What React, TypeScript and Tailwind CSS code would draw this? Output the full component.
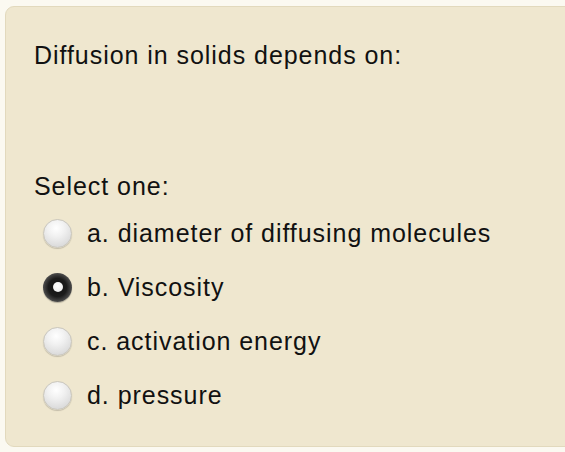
import React from "react";

const options = [
  { label: "a. diameter of diffusing molecules", checked: false },
  { label: "b. Viscosity", checked: true },
  { label: "c. activation energy", checked: false },
  { label: "d. pressure", checked: false },
];

function Radio({ checked }: { checked: boolean }) {
  if (checked) {
    return (
      <div className="flex h-[29px] w-[29px] shrink-0 items-center justify-center rounded-full bg-[radial-gradient(circle_at_50%_50%,#111_0%,#1c1c1c_45%,#555_75%,#9a9a9a_100%)] shadow-[0_1px_1px_rgba(0,0,0,0.25)]">
        <div className="h-[10px] w-[10px] rounded-full bg-[radial-gradient(circle_at_45%_40%,#ffffff_0%,#f2f2f2_60%,#cfcfcf_100%)]" />
      </div>
    );
  }
  return (
    <div className="h-[29px] w-[29px] shrink-0 rounded-full border border-[#c9c6bd] bg-[radial-gradient(circle_at_45%_30%,#ffffff_0%,#f1f1f1_35%,#dcdcdc_75%,#c8c8c8_100%)] shadow-[0_1px_1px_rgba(0,0,0,0.18)]" />
  );
}

export default function App() {
  return (
    <div className="min-h-[452px] w-[565px] overflow-hidden bg-[#fbf9f1] pl-[5px] pt-[6px] font-['Liberation_Sans',Arial,sans-serif] text-[#111111]">
      <div className="h-[441px] w-[580px] rounded-l-[9px] border border-[#e2d9bd] bg-[#efe7cf] pl-[28px] pt-[34px]">
        <div className="text-[25px] leading-[28px] tracking-[0.95px]">Diffusion in solids depends on:</div>
        <div className="mt-[103px] text-[25px] leading-[28px] tracking-[0.95px]">Select one:</div>
        <div className="mt-[6px] flex flex-col">
          {options.map((o) => (
            <div key={o.label} className="flex h-[54px] items-center pl-[9px]">
              <Radio checked={o.checked} />
              <span className="ml-[15px] text-[25px] leading-[28px] tracking-[0.95px]">{o.label}</span>
            </div>
          ))}
        </div>
      </div>
    </div>
  );
}
